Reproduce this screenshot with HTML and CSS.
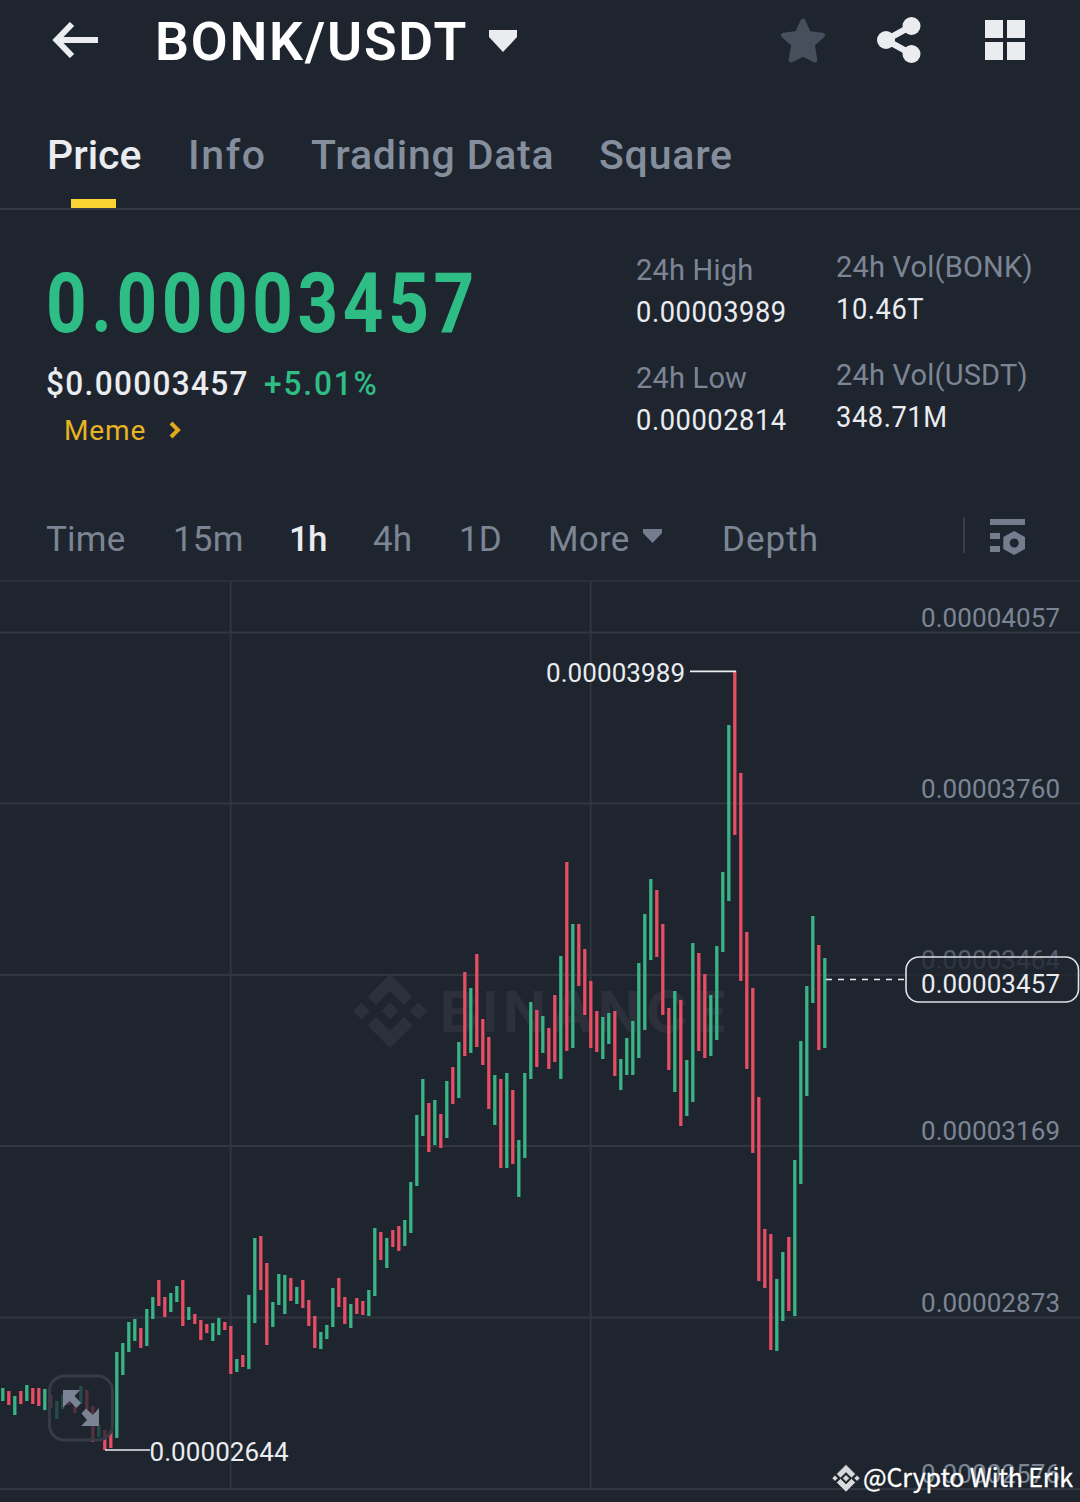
FILE: index.html
```html
<!DOCTYPE html>
<html lang="en">
<head>
<meta charset="utf-8">
<title>BONK/USDT</title>
<link rel="stylesheet" href="styles.css">
</head>
<body>
<header class="topbar">
  <svg class="back" width="46" height="36" viewBox="0 0 46 36"><path d="M20 2 4.500 18 20 34M4 18H46" fill="none" stroke="#eaecef" stroke-width="6"/></svg>
  <h1 class="pair">BONK/USDT</h1>
  <svg class="pair-caret" width="28" height="22" viewBox="0 0 28 22"><path d="M0 0H28V7L14 22 0 7Z" fill="#eaecef"/></svg>
  <div class="actions">
    <svg width="46" height="46" viewBox="0 0 46 46"><path d="M23 4 28.600 16.500 42.500 18.300 32.200 27.500 34.800 43 23 37 11.200 43 13.800 27.500 3.500 18.300 17.400 16.500Z" fill="#474f5c" stroke="#474f5c" stroke-width="5" stroke-linejoin="round"/></svg>
    <svg width="44" height="46" viewBox="0 0 44 46"><g fill="#eaecef"><circle cx="9" cy="23" r="9"/><circle cx="34.500" cy="9" r="9"/><circle cx="34.500" cy="37" r="9"/></g><path d="M34.500 9 9 23 34.500 37" fill="none" stroke="#eaecef" stroke-width="6.500"/></svg>
    <svg width="40" height="40" viewBox="0 0 40 40"><path d="M0 0H18V18H0ZM22 0H40V18H22ZM0 22H18V40H0ZM22 22H40V40H22Z" fill="#eaecef"/></svg>
  </div>
</header>

<nav class="tabs">
  <a class="tab active">Price</a>
  <a class="tab wide">Info</a>
  <a class="tab">Trading Data</a>
  <a class="tab">Square</a>
</nav>

<section class="quote">
  <div class="quote-main">
    <div class="last">0.00003457</div>
    <div class="sub"><span class="fiat">$0.00003457</span><span class="change">+5.01%</span></div>
    <div class="tag">Meme <svg width="12" height="18" viewBox="0 0 12 18"><path d="M2 2 9 9 2 16" fill="none" stroke="#e0a81c" stroke-width="4"/></svg></div>
  </div>
  <dl class="stats">
    <div><dt>24h High</dt><dd>0.00003989</dd></div>
    <div><dt>24h Low</dt><dd>0.00002814</dd></div>
  </dl>
  <dl class="stats volume">
    <div><dt>24h Vol(BONK)</dt><dd>10.46T</dd></div>
    <div><dt>24h Vol(USDT)</dt><dd>348.71M</dd></div>
  </dl>
</section>

<nav class="intervals">
  <a>Time</a><a>15m</a><a class="active">1h</a><a>4h</a><a>1D</a>
  <a class="more">More <svg width="19" height="14" viewBox="0 0 19 14"><path d="M0 0H19V4L9.500 14 0 4Z" fill="#747c8d"/></svg></a>
  <a class="depth">Depth</a>
  <span class="divider"></span>
  <svg class="settings" width="36" height="36" viewBox="0 0 36 36"><path d="M0 0H35V6H0ZM0 14H10V20H0ZM0 27H10V33H0Z" fill="#747c8d"/><path fill-rule="evenodd" d="M24.200 12 35 18V30L24.200 36 13.300 30V18ZM24.200 19.500a4.500 4.500 0 1 0 .01 0Z" fill="#747c8d"/></svg>
</nav>

<main class="chart">
<svg width="1080" height="920" viewBox="0 582 1080 920">
  <path class="grid" d="M0 632.500H1080M0 803.500H1080M0 975H1080M0 1146H1080M0 1317.500H1080M0 1489H1080M230.700 582V1489M590.700 582V1489"/>
  <g class="watermark">
    <path d="M390 974 412.500 996.500 404 1005 390 991 376 1005 367.500 996.500ZM390 1048 367.500 1025.500 376 1017 390 1031 404 1017 412.500 1025.500ZM353 1011 361.500 1002.500 370 1011 361.500 1019.500ZM410 1011 418.500 1002.500 427 1011 418.500 1019.500ZM381.500 1011 390 1002.500 398.500 1011 390 1019.500Z"/>
    <text x="440" y="1032" textLength="287">BINANCE</text>
  </g>
  <g class="axis">
    <text x="921" y="627" textLength="139">0.00004057</text>
    <text x="921" y="798" textLength="139">0.00003760</text>
    <text x="921" y="969" textLength="139" opacity=".6">0.00003464</text>
    <text x="921" y="1140" textLength="139">0.00003169</text>
    <text x="921" y="1312" textLength="139">0.00002873</text>
    <text x="921" y="1483" textLength="139">0.00002576</text>
  </g>
  <path class="up" transform="translate(-.2 0)" d="M3 1388V1401M15 1396V1415M27 1385V1401M45 1389V1410M57 1401V1419M63 1395V1409M81 1386V1404M99 1425V1437M117 1352V1438M123 1343V1375M129 1322V1352M135 1319V1341M147 1309V1346M153 1297V1319M171 1293V1312M177 1286V1302M189 1307V1320M213 1323V1341M219 1318V1335M237 1359V1372M249 1295V1369M255 1238V1323M273 1302V1327M279 1274V1305M285 1275V1314M297 1287V1304M321 1332V1349M327 1325V1339M333 1288V1327M351 1304V1328M369 1290V1316M375 1228V1296M387 1238V1268M405 1220V1246M411 1182V1233M417 1115V1186M423 1079V1136M435 1100V1145M447 1081V1138M459 1042V1098M471 988V1053M495 1075V1125M507 1073V1168M519 1140V1197M525 1073V1158M531 1002V1079M543 1016V1053M561 956V1079M573 924V1048M603 1017V1059M609 1013V1044M621 1059V1090M627 1038V1075M633 1021V1075M639 963V1058M645 914V1030M651 879V960M675 991V1092M687 1060V1116M693 943V1102M711 995V1056M717 946V1040M723 872V952M729 725V901M777 1279V1351M783 1252V1321M795 1160V1316M801 1041V1184M807 986V1096M813 916V1003M825 958V1048"/>
  <path class="down" transform="translate(-.2 0)" d="M9 1391V1405M21 1391V1404M33 1388V1404M39 1388V1406M51 1395V1408M69 1393V1405M75 1400V1413M87 1390V1410M93 1406V1442M105 1430V1450M111 1431V1448M141 1328V1348M159 1280V1306M165 1297V1317M183 1280V1326M195 1314V1324M201 1320V1340M207 1324V1333M225 1322V1330M231 1326V1374M243 1355V1367M261 1236V1290M267 1263V1345M291 1278V1301M303 1280V1308M309 1300V1326M315 1316V1348M339 1278V1307M345 1297V1324M357 1298V1314M363 1301V1315M381 1232V1260M393 1230V1247M399 1226V1251M429 1103V1152M441 1114V1148M453 1067V1104M465 972V1056M477 954V1047M483 1019V1065M489 1037V1109M501 1079V1168M513 1090V1164M537 1010V1067M549 1028V1069M555 995V1062M567 862V1051M579 924V986M585 949V1015M591 981V1048M597 1011V1052M615 1011V1076M657 890V957M663 924V1015M669 1008V1070M681 1000V1126M699 953V1051M705 974V1058M735 671V835M741 773V981M747 932V1069M753 988V1153M759 1097V1281M765 1229V1288M771 1234V1350M789 1237V1311M819 945V1050"/>
  <g class="marks">
    <path d="M690 671.300H736M105 1450H150"/>
    <path d="M826 979.500H906" stroke-dasharray="6 6"/>
    <text x="546" y="682" textLength="139">0.00003989</text>
    <text x="149.500" y="1461" textLength="139">0.00002644</text>
  </g>
  <rect x="906" y="957" width="172.500" height="45" rx="13" fill="#1f252f" fill-opacity=".7" stroke="#dfe2e8" stroke-width="1.600"/>
  <text class="current" x="921" y="993" textLength="139">0.00003457</text>
  <g>
    <rect x="49.500" y="1376" width="63" height="64" rx="15" fill="#1f252f" fill-opacity=".72" stroke="#363c47" stroke-width="3"/>
    <path d="M63 1390H80L74.500 1396 81 1403 76.500 1408 69.500 1401 63 1407.500ZM99 1426H81L87 1420 81.500 1413.500 86 1408.500 93 1415 99 1408Z" fill="#7b8494"/>
  </g>
  <g class="credit">
    <path d="M846 1464.500 855.500 1474 851.500 1478 846 1472.500 840.500 1478 836.500 1474ZM846 1492 836.500 1482.500 840.500 1478.500 846 1484 851.500 1478.500 855.500 1482.500ZM832 1478.200 835 1475.200 838 1478.200 835 1481.200ZM854 1478.200 857 1475.200 860 1478.200 857 1481.200ZM842.500 1478.200 846 1474.700 849.500 1478.200 846 1481.700Z" fill="#d8d9db" stroke="#1f252f" stroke-width=".6"/>
    <text x="863" y="1487" textLength="210">@Crypto With Erik</text>
  </g>
</svg>
</main>
</body>
</html>
```
FILE: styles.css
```css
* { box-sizing: border-box; }
body {
  margin: 0;
  width: 1080px;
  height: 1502px;
  overflow: hidden;
  background: #1f252f;
  color: #eaecef;
  font-family: Roboto, "Noto Sans", sans-serif;
}
svg { display: block; flex: none; }

.topbar { display: flex; align-items: center; height: 84px; padding: 0 55px 0 52px; }
.back { margin-bottom: 4px; }
.pair { width: 333px; margin: 0 0 0 57px; font-size: 53.5px; font-weight: 600; line-height: 86px; letter-spacing: 1.8px; color: #fff; }
.pair-caret { margin-bottom: 3px; margin-left: 1px; }
.actions { display: flex; align-items: center; margin-left: auto; margin-bottom: 4px; }
.actions svg:nth-child(2) { margin: 0 64px 0 51px; }

.tabs {
  display: grid;
  grid-template-columns: 141px 123px 288px auto;
  height: 126px;
  padding: 46px 0 0 47px;
  border-bottom: 2px solid #343b45;
  font-size: 41px;
  font-weight: 500;
  line-height: 50px;
  letter-spacing: .8px;
  color: #848e9c;
}
.tab.active { color: #eaecef; letter-spacing: 0; }
.tab.wide { letter-spacing: 1.6px; }
.tab.active::after { content: ""; display: block; width: 45px; height: 9px; margin: 19px 0 0 24px; background: #fcd535; }

.quote { display: grid; grid-template-columns: 588px 200px auto; height: 288px; padding-left: 48px; }
.quote-main { padding-top: 44px; white-space: nowrap; }
.last { width: max-content; font-size: 84px; font-weight: 700; line-height: 100px; letter-spacing: 5.4px; color: #2ebd85; transform: scaleX(.845); transform-origin: left; margin-left: -2px; }
.sub { display: flex; margin: 8px 0 0 -2px; font-size: 34px; font-weight: 500; line-height: 42px; }
.fiat, .change { transform: scaleX(.93); transform-origin: left; letter-spacing: 1.4px; }
.fiat { width: 218px; }
.change { color: #2ebd85; letter-spacing: 2px; }
.tag { display: flex; align-items: center; gap: 23px; margin: 10px 0 0 16px; font-size: 28px; line-height: 34px; letter-spacing: .9px; color: #e8b323; }
.tag svg { margin-bottom: 2px; }

.stats { margin: 0; padding-top: 41px; font-size: 29px; line-height: 38px; }
.stats div { height: 108px; }
.stats dt { color: #7c8594; letter-spacing: .2px; }
.stats dd { width: max-content; margin: 4px 0 0; transform: scaleX(.94); transform-origin: left; letter-spacing: .6px; }
.volume { padding-top: 38px; }

.intervals {
  display: grid;
  grid-template-columns: 127px 116px 84px 86px 89px 174px 241px 27px auto;
  align-items: center;
  height: 84px;
  padding: 1px 0 0 46px;
  border-bottom: 2px solid #2b313b;
  font-size: 35px;
  line-height: 40px;
  letter-spacing: .2px;
  color: #7c8594;
}
.intervals .active { color: #eaecef; font-weight: 500; letter-spacing: -.8px; }
.intervals .depth { letter-spacing: 1px; }
.more { display: flex; align-items: center; gap: 14px; }
.more svg { margin-bottom: 7px; }
.divider { width: 2px; height: 36px; margin-bottom: 9px; background: #363d48; }
.settings { margin-bottom: 6px; }

.grid { fill: none; stroke: #303741; stroke-width: 1.8; }
.watermark { fill: #2b303b; font: 700 57px Inter, sans-serif; }
.axis { fill: #7c8594; font-size: 26px; }
.up, .down { fill: none; stroke-width: 3.3; }
.up { stroke: #38b485; }
.down { stroke: #e54e63; }
.marks path { fill: none; stroke: #eaecef; stroke-width: 1.7; }
.marks text, .current { fill: #eaecef; font-size: 26px; }
.credit text { fill: #fff; font: 400 25px "Noto Sans CJK SC", "Noto Sans", sans-serif; stroke: #fff; stroke-width: .3px; }
```
